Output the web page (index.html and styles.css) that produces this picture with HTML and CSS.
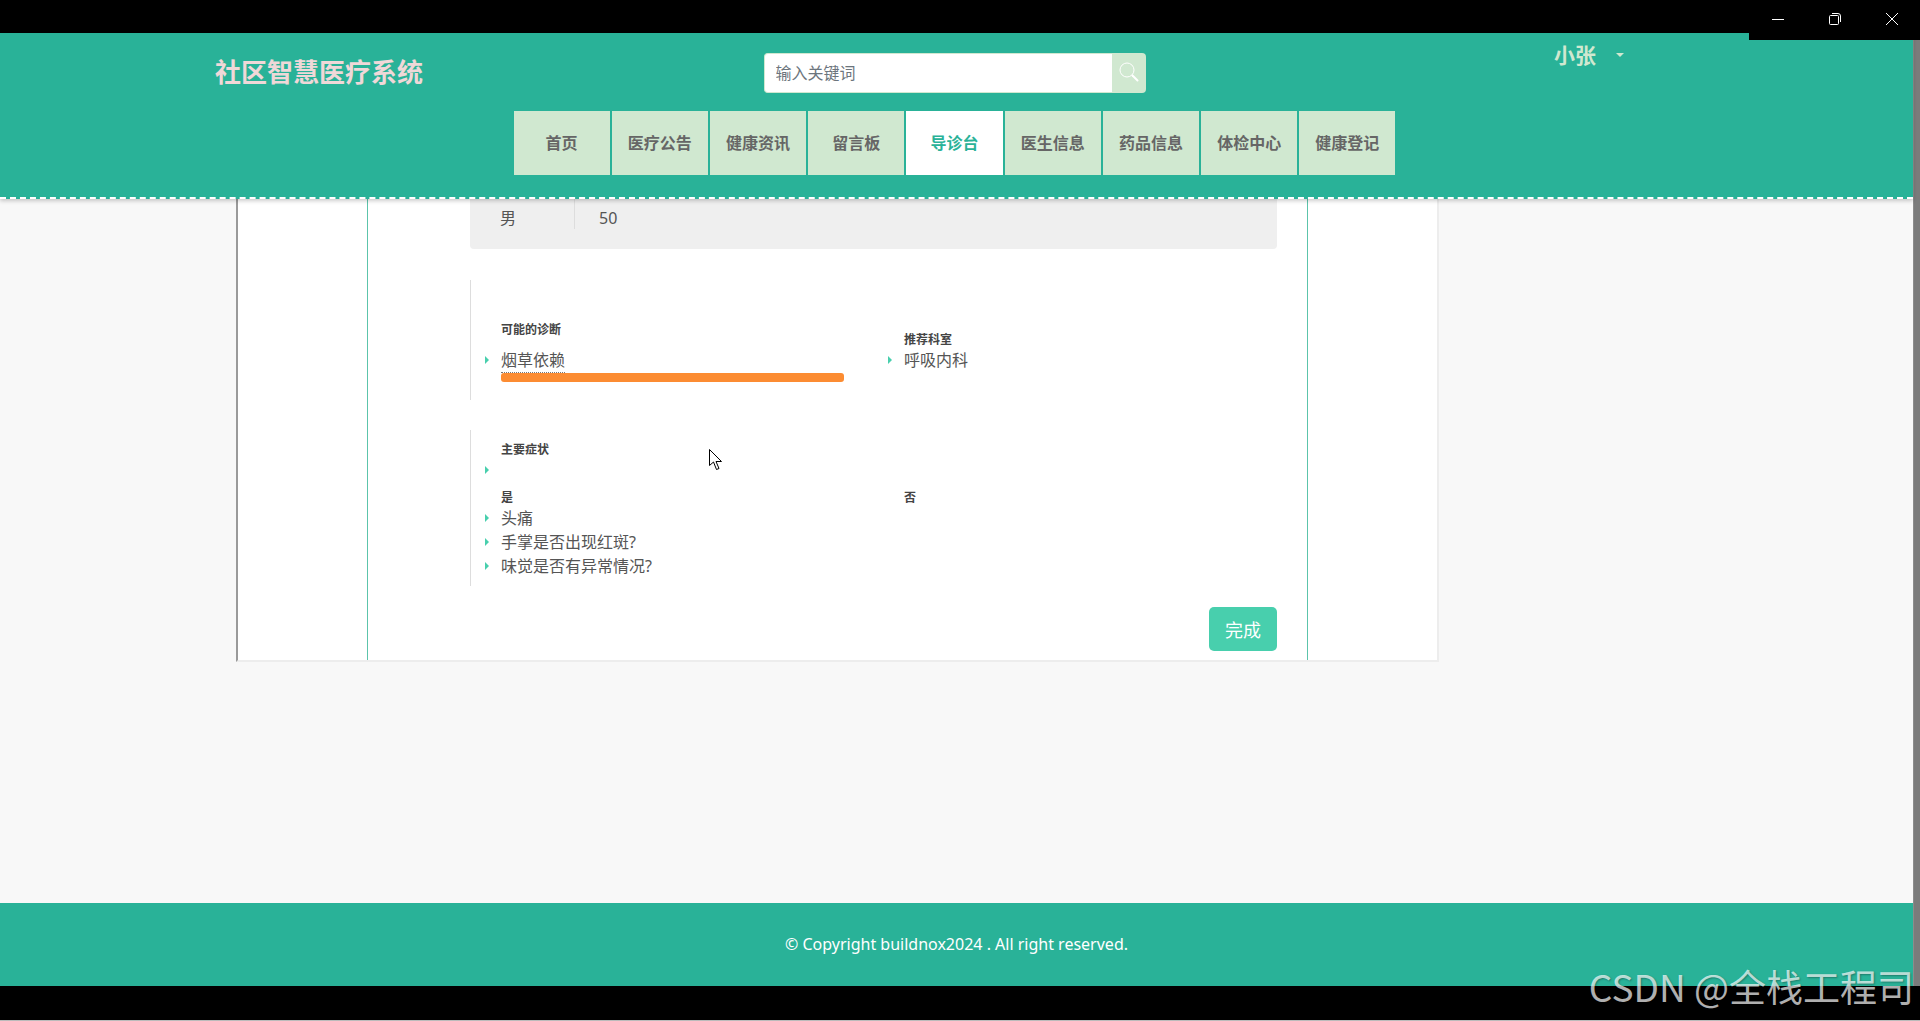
FILE: index.html
```html
<!DOCTYPE html>
<html lang="zh-CN">
<head>
    <meta charset="UTF-8">
    <meta name="viewport" content="width=device-width, initial-scale=1.0">
    <title>社区智慧医疗系统</title>
    <link rel="stylesheet" href="styles.css">
</head>
<body>

    <div class="titlebar">
        <div class="window-controls">
            <button type="button" aria-label="最小化">
                <svg width="12" height="12" viewBox="0 0 12 12"><path d="M0 6.5h12"/></svg>
            </button>
            <button type="button" aria-label="还原">
                <svg width="12" height="12" viewBox="0 0 12 12"><rect x="0.5" y="2.5" width="9" height="9" rx="1"/><path d="M3 .5h6a2.5 2.5 0 0 1 2.5 2.5v6"/></svg>
            </button>
            <button type="button" aria-label="关闭">
                <svg width="12" height="12" viewBox="0 0 12 12"><path d="M0 0l12 12M12 0L0 12"/></svg>
            </button>
        </div>
    </div>

    <div class="viewport">
        <div class="page">
            <header class="header">
                <div class="header-top">
                    <h1 class="logo">社区智慧医疗系统</h1>
                    <form class="search">
                        <input type="text" placeholder="输入关键词" aria-label="输入关键词">
                        <button type="button" aria-label="搜索">
                            <svg width="20" height="20" viewBox="0 0 20 20"><circle cx="8" cy="8" r="7"/><path class="handle" d="M13.5 13.5l5 5"/></svg>
                        </button>
                    </form>
                    <button type="button" class="user">小张<span class="caret"></span></button>
                </div>
                <nav class="nav">
                    <a href="#">首页</a>
                    <a href="#">医疗公告</a>
                    <a href="#">健康资讯</a>
                    <a href="#">留言板</a>
                    <a href="#" class="active">导诊台</a>
                    <a href="#">医生信息</a>
                    <a href="#">药品信息</a>
                    <a href="#">体检中心</a>
                    <a href="#">健康登记</a>
                </nav>
            </header>

            <main class="content">
                <div class="frame">
                    <div class="panel">
                        <div class="patient">
                            <span class="sex">男</span>
                            <span class="age">50</span>
                        </div>

                        <section class="block diagnosis">
                            <div>
                                <h6>可能的诊断</h6>
                                <ul>
                                    <li><abbr>烟草依赖</abbr></li>
                                </ul>
                                <div class="bar"></div>
                            </div>
                            <div class="department">
                                <h6>推荐科室</h6>
                                <ul>
                                    <li>呼吸内科</li>
                                </ul>
                            </div>
                        </section>

                        <section class="block symptoms">
                            <div class="main-symptom">
                                <h6>主要症状</h6>
                                <ul>
                                    <li></li>
                                </ul>
                            </div>
                            <div>
                                <h6>是</h6>
                                <ul>
                                    <li>头痛</li>
                                    <li>手掌是否出现红斑?</li>
                                    <li>味觉是否有异常情况?</li>
                                </ul>
                            </div>
                            <div>
                                <h6>否</h6>
                            </div>
                        </section>

                        <div class="actions">
                            <button type="button" class="done">完成</button>
                        </div>
                    </div>
                </div>
            </main>

            <footer class="footer">© Copyright buildnox2024 . All right reserved.</footer>
        </div>
        <div class="scrollbar"></div>
    </div>

    <div class="bottombar"></div>

    <div class="watermark">CSDN @全栈工程司</div>

    <svg class="cursor" width="14" height="22" viewBox="0 0 14 22"><path d="M.5.5v16l4-3.5 3 7.5 2.5-1-3-7h5.5z"/></svg>

</body>
</html>
```
FILE: styles.css
```css
* {
    box-sizing: border-box;
}
body {
    margin: 0;
    min-height: 100vh;
    display: flex;
    flex-direction: column;
    position: relative;
    overflow: hidden;
    font-family: "Noto Sans", "Noto Sans CJK SC", sans-serif;
    font-size: 16px;
    color: #555;
    background: #f8f8f8;
}
h1, h6, ul {
    margin: 0;
    padding: 0;
}
button {
    border: 0;
    padding: 0;
    font-family: inherit;
    cursor: pointer;
}

/* Window chrome */
.titlebar {
    height: 33px;
    background: #000;
}
.window-controls {
    position: absolute;
    top: 0;
    right: 0;
    z-index: 3;
    width: 171px;
    height: 40px;
    padding-bottom: 2px;
    display: flex;
    background: #000;
}
.window-controls button {
    flex: 1;
    display: flex;
    align-items: center;
    justify-content: center;
    background: none;
}
.window-controls svg {
    fill: none;
    stroke: #fff;
}
.viewport {
    flex: 1;
    display: flex;
}
.page {
    flex: 1;
    display: flex;
    flex-direction: column;
}
.scrollbar {
    width: 7px;
    background: #7b7b7b;
    border-left: 1px solid #8c8c8c;
}
.bottombar {
    height: 35px;
    background: #000;
    border-bottom: 1px solid #bbb;
}

/* Header */
.header {
    position: relative;
    z-index: 1;
    padding: 0 4px 22px 0;
    background: #29b298;
    border-bottom: 2px dashed #fff;
    box-shadow: 0 2px 4px rgba(0, 0, 0, 0.2);
}
.header-top {
    max-width: 1479px;
    height: 78px;
    margin: 0 auto;
    display: grid;
    grid-template-columns: 1fr 382px 1fr;
    align-items: start;
}
.logo {
    margin-top: 20px;
    font-size: 26px;
    line-height: 38px;
    color: #f0d8d8;
}
.search {
    height: 40px;
    margin-top: 20px;
    display: flex;
}
.search input {
    flex: 1;
    min-width: 0;
    padding: 0 11px;
    border: 1px solid #d0e8d0;
    border-right: 0;
    border-radius: 4px 0 0 4px;
    font-family: inherit;
    font-size: 16px;
}
.search input::placeholder {
    color: #6c757d;
}
.search button {
    width: 34px;
    padding-bottom: 2px;
    display: flex;
    align-items: center;
    justify-content: center;
    border-radius: 0 4px 4px 0;
    background: #d0e8d0;
}
.search svg {
    fill: none;
    stroke: #fff;
}
.search .handle {
    stroke-width: 2;
    stroke-linecap: round;
}
.user {
    justify-self: end;
    margin-right: 70px;
    display: flex;
    align-items: center;
    gap: 20px;
    font-size: 21px;
    font-weight: bold;
    line-height: 44px;
    color: #d0e8d0;
    background: none;
}
.caret {
    border: 4px solid transparent;
    border-top-color: #d0e8d0;
    border-bottom: 0;
}
.nav {
    max-width: 882px;
    margin: 0 auto;
    display: flex;
    gap: 2px;
}
.nav a {
    flex: 1 1 0;
    line-height: 64px;
    text-align: center;
    font-weight: bold;
    color: #666;
    text-decoration: none;
    background: #d0e8d0;
}
.nav a.active {
    color: #29b298;
    background: #fff;
}

/* Guide result */
.content {
    flex: 1;
    width: 100%;
    max-width: 1441px;
    margin: 0 auto;
}
.frame {
    max-width: 1203px;
    background: #fff;
    border: 2px solid #ededed;
    border-left-color: #9a9a9a;
    border-top: 0;
}
.panel {
    max-width: 941px;
    margin: 0 auto;
    padding: 0 30px 9px 102px;
    border: 1px solid #5cc4ab;
    border-width: 0 1px;
}
.patient {
    display: flex;
    padding: 0 30px 20px;
    background: #efefef;
    border-radius: 0 0 4px 4px;
}
.patient span {
    padding-top: 9px;
    line-height: 20px;
}
.patient .sex {
    width: 75px;
    padding-bottom: 1px;
    border-right: 1px solid #ddd;
}
.patient .age {
    padding-left: 24px;
}
.block {
    display: grid;
    grid-template-columns: 1fr 1fr;
    column-gap: 60px;
    padding: 0 30px;
    border-left: 1px solid #ddd;
}
.block h6 {
    font-size: 12px;
    line-height: 16px;
    color: #444;
}
.block ul {
    list-style: none;
}
.block li {
    position: relative;
    height: 24px;
    line-height: 24px;
}
.block li::before {
    content: "";
    position: absolute;
    top: 8px;
    left: -16px;
    border: 4px solid transparent;
    border-left-color: #48cfad;
    border-right: 0;
}
.diagnosis {
    margin: 31px 0 30px;
    padding-top: 42px;
    padding-bottom: 18px;
}
.diagnosis h6 {
    margin-bottom: 10px;
}
.diagnosis .department {
    padding-top: 10px;
}
.diagnosis .department h6 {
    margin-bottom: 0;
}
.diagnosis abbr {
    display: inline-block;
    border-bottom: 1px dotted #777;
}
.bar {
    height: 9px;
    margin-top: 1px;
    border-radius: 3px;
    background: #fc8c32;
}
.symptoms {
    row-gap: 8px;
    padding-top: 12px;
    padding-bottom: 8px;
}
.main-symptom {
    grid-column: 1 / 3;
}
.actions {
    margin-top: 21px;
    display: flex;
    justify-content: flex-end;
}
.done {
    height: 44px;
    padding: 0 16px;
    border-radius: 5px;
    font-size: 18px;
    color: #fff;
    background: #48cfad;
}

/* Footer */
.footer {
    line-height: 83px;
    text-align: center;
    color: #fff;
    background: #29b298;
}

.watermark {
    position: absolute;
    right: 6px;
    bottom: 7px;
    z-index: 4;
    font-family: "Noto Sans CJK SC", sans-serif;
    font-size: 37px;
    line-height: 56px;
    color: rgba(255, 255, 255, 0.7);
    text-shadow: 1px 1px 2px rgba(0, 0, 0, 0.3);
}
.cursor {
    position: absolute;
    top: 449px;
    left: 709px;
    z-index: 4;
    fill: #fff;
    stroke: #000;
}
```
